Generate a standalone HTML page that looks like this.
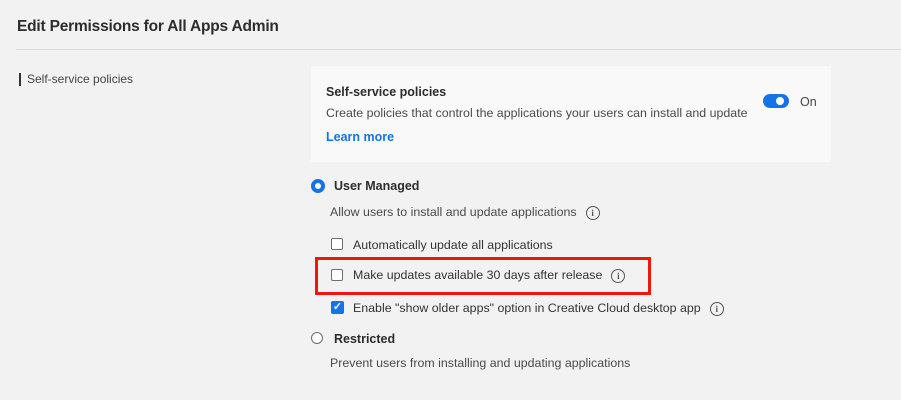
<!DOCTYPE html>
<html><head><style>
body{margin:0;width:901px;height:400px;background:#f2f2f2;font-family:"Liberation Sans",sans-serif;color:#2c2c2c;position:relative;overflow:hidden}
.a{position:absolute;white-space:nowrap;line-height:14px}
.t{font-size:12.4px;color:#4a4a4a}
.b{font-weight:bold;color:#2c2c2c}
.cb{position:absolute;width:10px;height:10px;border:1.5px solid #6e6e6e;border-radius:2px;background:#fff}
.info{display:inline-block;vertical-align:middle;margin-left:9px;width:12px;height:12px;border:1.3px solid #555;border-radius:50%;font-size:9px;font-weight:bold;text-align:center;line-height:12px;color:#555;font-family:"Liberation Serif",serif}
</style></head><body>
<div class="a b" style="left:17px;top:18px;font-size:15.5px;line-height:18px;letter-spacing:-0.2px">Edit Permissions for All Apps Admin</div>
<div style="position:absolute;left:16px;right:0;top:49px;height:1px;background:#dedede"></div>
<div style="position:absolute;left:19px;top:73px;width:2px;height:13px;background:#333"></div>
<div class="a t" style="left:27px;top:72px;font-size:12px;color:#444">Self-service policies</div>
<div style="position:absolute;left:311px;top:66px;width:520px;height:96px;background:#f9f9f9"></div>
<div class="a b" style="left:326px;top:85px;font-size:12.5px">Self-service policies</div>
<div class="a t" style="left:326px;top:106px;letter-spacing:0">Create policies that control the applications your users can install and update</div>
<div class="a b" style="left:326px;top:130px;font-size:12.5px;color:#1473e6">Learn more</div>
<div style="position:absolute;left:763px;top:94px;width:26px;height:14px;border-radius:7px;background:#1473e6"></div>
<div style="position:absolute;left:776px;top:97px;width:8px;height:8px;border-radius:50%;background:#fff"></div>
<div class="a t" style="left:800px;top:95px;font-size:12.5px;color:#444">On</div>
<div style="position:absolute;left:311px;top:179px;width:6px;height:6px;border:4px solid #1473e6;border-radius:50%;background:#fff"></div>
<div class="a b" style="left:334px;top:179px;font-size:12.5px">User Managed</div>
<div class="a t" style="left:330px;top:205px">Allow users to install and update applications<span class="info">i</span></div>
<div class="cb" style="left:331px;top:238px"></div>
<div class="a t" style="left:353px;top:238px;color:#333">Automatically update all applications</div>
<div style="position:absolute;left:315px;top:257px;width:330px;height:32px;border:3px solid #f2170c"></div>
<div class="cb" style="left:331px;top:269px"></div>
<div class="a t" style="left:353px;top:268px;color:#333">Make updates available 30 days after release<span class="info">i</span></div>
<div style="position:absolute;left:331px;top:301px;width:13px;height:13px;background:#1473e6;border-radius:2px;color:#fff;font-size:11px;line-height:13px;text-align:center;font-weight:bold">✓</div>
<div class="a t" style="left:353px;top:301px;color:#333">Enable "show older apps" option in Creative Cloud desktop app<span class="info">i</span></div>
<div style="position:absolute;left:311px;top:332px;width:10px;height:10px;border:1.5px solid #6e6e6e;border-radius:50%;background:#fff"></div>
<div class="a b" style="left:334px;top:332px;font-size:12.5px">Restricted</div>
<div class="a t" style="left:330px;top:356px">Prevent users from installing and updating applications</div>
</body></html>
